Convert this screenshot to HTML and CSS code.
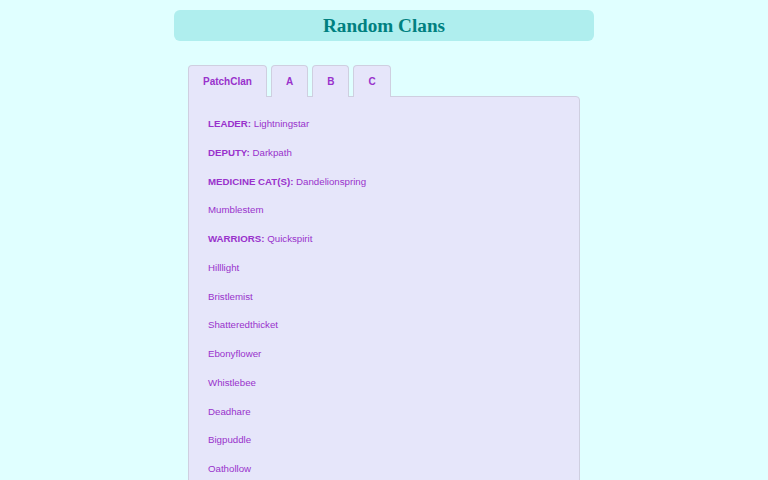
FILE: index.html
```html
<!DOCTYPE html>
<html lang="en">
<head>
<meta charset="UTF-8" />
<meta name="viewport" content="width=device-width, initial-scale=1" />
<title>Random Clans</title>
<link rel="stylesheet" href="styles.css">
</head>
<body>

<h1 class="title">Random Clans</h1>

<div class="clans">
  <div class="tabs">
    <button class="tab active">PatchClan</button>
    <button class="tab">A</button>
    <button class="tab">B</button>
    <button class="tab">C</button>
  </div>
  <div class="panel">
    <p><b>LEADER:</b> Lightningstar</p>
    <p><b>DEPUTY:</b> Darkpath</p>
    <p><b>MEDICINE CAT(S):</b> Dandelionspring</p>
    <p>Mumblestem</p>
    <p><b>WARRIORS:</b> Quickspirit</p>
    <p>Hilllight</p>
    <p>Bristlemist</p>
    <p>Shatteredthicket</p>
    <p>Ebonyflower</p>
    <p>Whistlebee</p>
    <p>Deadhare</p>
    <p>Bigpuddle</p>
    <p>Oathollow</p>
  </div>
</div>

</body>
</html>
```

FILE: styles.css
```css
body {
  background: #e0ffff;
  margin: 0;
  padding: 10px 0 0;
  font-family: "Liberation Sans", Arial, sans-serif;
}
.title {
  width: 420px;
  height: 31px;
  margin: 0 auto 24px;
  background: #afeeee;
  border-radius: 6px;
  color: #008080;
  font-family: "Liberation Serif", "Times New Roman", serif;
  font-size: 19.2px;
  font-weight: 700;
  line-height: 32px;
  text-align: center;
}
.clans {
  width: 392px;
  margin: 0 auto;
}
.tabs {
  display: flex;
  gap: 4px;
}
.tab {
  height: 32px;
  padding: 0 14px;
  margin-bottom: -1px;
  background: #e6e6fa;
  border: 1px solid #cfcfe0;
  border-bottom: none;
  border-radius: 4px 4px 0 0;
  color: #9932cc;
  font-family: inherit;
  font-size: 10px;
  font-weight: 700;
  cursor: pointer;
}
.panel {
  background: #e6e6fa;
  border: 1px solid #cfcfe0;
  border-radius: 0 4px 0 0;
  padding: 21px 19px 20px;
  color: #9932cc;
  font-size: 9.7px;
}
.panel p {
  margin: 0 0 16px;
  line-height: 12.75px;
}
.panel b {
  font-weight: 700;
}
```
